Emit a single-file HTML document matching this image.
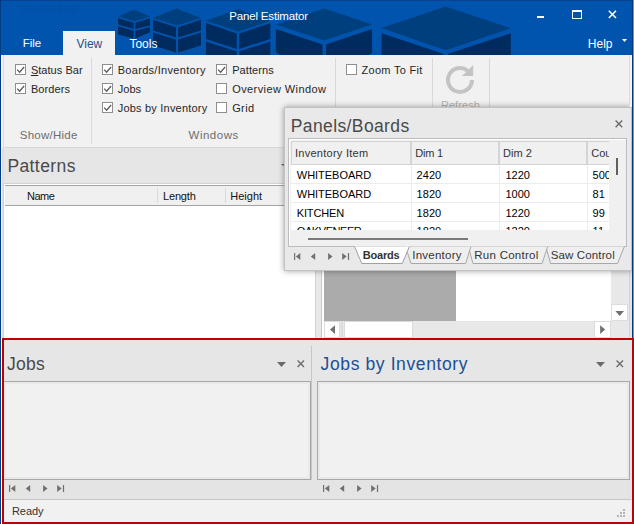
<!DOCTYPE html><html><head><meta charset="utf-8"><title>Panel Estimator</title><style>
html,body{margin:0;padding:0;}
body{width:634px;height:524px;position:relative;overflow:hidden;background:#ffffff;font-family:"Liberation Sans", sans-serif;}
.a{position:absolute;box-sizing:border-box;}
.t{position:absolute;white-space:pre;font-family:"Liberation Sans", sans-serif;}
.cb{width:11px;height:11px;background:#fff;border:1px solid #8e8e8e;}
svg{position:absolute;overflow:visible;}

</style></head><body>
<div class="a" style="left:0px;top:0px;width:634px;height:55px;background:#0054ad;"></div>
<svg class="a" style="left:0;top:0" width="634" height="55" viewBox="0 0 634 55">
<g fill="#003f7e">
<polygon points="133.7,9.6 150,16.6 134.4,21.2 118,16.6"/>
<polygon points="176.5,8.4 201,18 177,25.6 153,18"/>
<polygon points="237.6,9.2 270.3,21 238,31.6 206,20.8"/>
<polygon points="324.5,8.5 372.2,24.6 324.2,40.6 275.7,24.6"/>
<polygon points="445.7,6.6 510.8,28.2 445.7,50.2 381.4,28"/>
</g>
<g fill="#002b5e">
<!-- box1 -->
<polygon points="118,18.2 133.6,22.8 133.6,29 118,24.4"/>
<polygon points="135.4,22.8 150,18.2 150,25.4 135.4,29"/>
<polygon points="118,26.2 133.6,30.8 133.6,38.6 118,34.6"/>
<polygon points="135.4,30.8 150,27 150,32.2 135.4,38.6"/>
<!-- box2 -->
<polygon points="153,19.8 176,27.2 176,37.4 153,30.6"/>
<polygon points="178,27.2 201,19.8 201,30.6 178,37.4"/>
<polygon points="153,32.6 176,39.6 176,52.6 153,45.4"/>
<polygon points="178,39.6 201,32.6 201,45.4 178,52.6"/>
<!-- box3 -->
<polygon points="206,23 236.8,33.4 236.8,49 206,39"/>
<polygon points="239.2,33.4 270.3,23.2 270.3,39 239.2,49"/>
<polygon points="206,41.4 236.8,51.6 236.8,55 206,55"/>
<polygon points="239.2,51.6 270.3,41.4 270.3,55 239.2,55"/>
<!-- box4 -->
<polygon points="275.8,29 322.6,44.6 322.6,55 279.8,55 275.8,52"/>
<polygon points="326,44.6 372,29 372,53 369.2,55 326,55"/>
<!-- box5 -->
<polygon points="381.6,33.2 443.4,53.8 443.4,55 381.6,55"/>
<polygon points="448.2,53.8 510.8,33.2 510.8,55 448.2,55"/>
</g>
</svg>
<div class="a" style="left:0px;top:0px;width:634px;height:1px;background:#0a428f;"></div>
<div class="a" style="left:63px;top:31px;width:52px;height:24px;background:#f1f1f1;"></div>
<div class="a" style="left:537px;top:16px;width:7px;height:2px;background:#fff;"></div>
<div class="a" style="left:572px;top:10px;width:10px;height:9px;border:1px solid #fff;border-top-width:2px;"></div>
<svg class="a" style="left:608px;top:10px" width="9" height="9" viewBox="0 0 9 9"><path d="M0.8 0.8 L8 8 M8 0.8 L0.8 8" stroke="#fff" stroke-width="1.5" fill="none"/></svg>
<svg class="a" style="left:622px;top:39px" width="5" height="3" viewBox="0 0 5 3"><polygon points="0,0 5,0 2.5,3" fill="#fff"/></svg>
<div class="a" style="left:1px;top:55px;width:632px;height:92px;background:#f1f1f1;"></div>
<div class="a" style="left:1px;top:147px;width:632px;height:1px;background:#d8d8d8;"></div>
<div class="a" style="left:91px;top:58px;width:1px;height:86px;background:#d9d9d9;"></div>
<div class="a" style="left:335px;top:58px;width:1px;height:86px;background:#d9d9d9;"></div>
<div class="a" style="left:432px;top:58px;width:1px;height:86px;background:#d9d9d9;"></div>
<div class="a" style="left:489px;top:58px;width:1px;height:86px;background:#d9d9d9;"></div>
<div class="a cb" style="left:15px;top:64px"></div><svg class="a" style="left:15px;top:64px" width="11" height="11" viewBox="0 0 11 11"><path d="M2.2 5.6 L4.6 8.2 L9.1 3.0" fill="none" stroke="#5c5c5c" stroke-width="1.35"/></svg>
<div class="a cb" style="left:15px;top:83px"></div><svg class="a" style="left:15px;top:83px" width="11" height="11" viewBox="0 0 11 11"><path d="M2.2 5.6 L4.6 8.2 L9.1 3.0" fill="none" stroke="#5c5c5c" stroke-width="1.35"/></svg>
<div class="a cb" style="left:102px;top:64px"></div><svg class="a" style="left:102px;top:64px" width="11" height="11" viewBox="0 0 11 11"><path d="M2.2 5.6 L4.6 8.2 L9.1 3.0" fill="none" stroke="#5c5c5c" stroke-width="1.35"/></svg>
<div class="a cb" style="left:102px;top:83px"></div><svg class="a" style="left:102px;top:83px" width="11" height="11" viewBox="0 0 11 11"><path d="M2.2 5.6 L4.6 8.2 L9.1 3.0" fill="none" stroke="#5c5c5c" stroke-width="1.35"/></svg>
<div class="a cb" style="left:102px;top:102px"></div><svg class="a" style="left:102px;top:102px" width="11" height="11" viewBox="0 0 11 11"><path d="M2.2 5.6 L4.6 8.2 L9.1 3.0" fill="none" stroke="#5c5c5c" stroke-width="1.35"/></svg>
<div class="a cb" style="left:216px;top:64px"></div><svg class="a" style="left:216px;top:64px" width="11" height="11" viewBox="0 0 11 11"><path d="M2.2 5.6 L4.6 8.2 L9.1 3.0" fill="none" stroke="#5c5c5c" stroke-width="1.35"/></svg>
<div class="a cb" style="left:216px;top:83px"></div>
<div class="a cb" style="left:216px;top:102px"></div>
<div class="a cb" style="left:346px;top:64px"></div>
<svg class="a" style="left:440px;top:60px" width="40" height="40" viewBox="440 60 40 40">
<path d="M472 80 A12 12 0 1 1 467.6 70.7" fill="none" stroke="#c4c4c4" stroke-width="4"/>
<polygon points="473.2,65 473.2,76 462,76" fill="#c4c4c4"/></svg>
<div class="a" style="left:1px;top:148px;width:632px;height:37px;background:#e6e6e6;"></div>
<div class="a" style="left:3px;top:183px;width:313px;height:155px;background:#fff;border:1px solid #d2d2d2;border-bottom:none;"></div>
<div class="a" style="left:5px;top:185px;width:310px;height:21px;background:#f0f0f0;border-top:1px solid #a4a4a4;border-bottom:1px solid #a4a4a4;"></div>
<div class="a" style="left:157px;top:188px;width:1px;height:15px;background:#dadada;"></div>
<div class="a" style="left:225px;top:188px;width:1px;height:15px;background:#dadada;"></div>
<svg class="a" style="left:281px;top:164px" width="4" height="2" viewBox="0 0 4 2"><polygon points="0,0 4,0 2,2" fill="#6a6a6a"/></svg>
<div class="a" style="left:316px;top:147px;width:316px;height:191px;background:#ffffff;"></div>
<div class="a" style="left:316px;top:147px;width:5px;height:191px;background:#e8e8e8;"></div>
<div class="a" style="left:321px;top:147px;width:1px;height:191px;background:#c8c8c8;"></div>
<div class="a" style="left:324px;top:271px;width:132px;height:50px;background:#ababab;"></div>
<div class="a" style="left:324px;top:321px;width:305px;height:17px;background:#e8e8e8;"></div>
<div class="a" style="left:611px;top:271px;width:18px;height:50px;background:#e8e8e8;"></div>
<div class="a" style="left:324px;top:321px;width:16px;height:17px;background:#fefefe;border:1px solid #dcdcdc;"></div>
<div class="a" style="left:341px;top:321px;width:2px;height:17px;background:#dcdcdc;"></div>
<div class="a" style="left:344px;top:321px;width:69px;height:17px;background:#fefefe;border:1px solid #dadada;"></div>
<div class="a" style="left:594px;top:321px;width:17px;height:17px;background:#fefefe;border:1px solid #dcdcdc;"></div>
<div class="a" style="left:611px;top:304px;width:17px;height:17px;background:#fefefe;border:1px solid #dcdcdc;"></div>
<div class="a" style="left:629px;top:147px;width:1px;height:191px;background:#d4d4d4;"></div>
<div class="a" style="left:630px;top:147px;width:2px;height:191px;background:#e4e4e4;"></div>
<svg class="a" style="left:0;top:0" width="634" height="524" viewBox="0 0 634 524"><g fill="#707070"><polygon points="330,329.6 335,325.2 335,334"/><polygon points="605.2,329.6 600.1,325.2 600.1,334"/><polygon points="615.4,311 624,311 619.7,316"/></g></svg>
<div class="a" style="left:2px;top:338px;width:630px;height:184px;background:#e6e6e6;"></div>
<div class="a" style="left:3px;top:381px;width:308px;height:99px;background:#f1f1f1;border:1px solid #a8a8a8;box-shadow:inset 0 0 0 2px #e9e9e9;"></div>
<div class="a" style="left:317px;top:381px;width:313px;height:99px;background:#f1f1f1;border:1px solid #a8a8a8;box-shadow:inset 0 0 0 2px #e9e9e9;"></div>
<div class="a" style="left:311px;top:346px;width:1px;height:153px;background:#c6c6c6;"></div>
<div class="a" style="left:4px;top:480px;width:627px;height:19px;background:#e4e4e4;"></div>
<div class="a" style="left:4px;top:499px;width:627px;height:1px;background:#c6c6c6;"></div>
<div class="a" style="left:4px;top:500px;width:628px;height:22px;background:#f1f1f1;"></div>
<svg class="a" style="left:8.8px;top:485px" width="60" height="7" viewBox="0 0 60 7"><g fill="#707070"><rect x="0" y="0" width="1.2" height="7"/><polygon points="6.3,0 6.3,7 1.9,3.5"/><polygon points="21.2,0 21.2,7 16.8,3.5"/><polygon points="34.1,0 34.1,7 38.5,3.5"/><polygon points="48.2,0 48.2,7 52.7,3.5"/><rect x="53.9" y="0" width="1.2" height="7"/></g></svg>
<svg class="a" style="left:322.9px;top:485px" width="60" height="7" viewBox="0 0 60 7"><g fill="#707070"><rect x="0" y="0" width="1.2" height="7"/><polygon points="6.3,0 6.3,7 1.9,3.5"/><polygon points="21.2,0 21.2,7 16.8,3.5"/><polygon points="34.1,0 34.1,7 38.5,3.5"/><polygon points="48.2,0 48.2,7 52.7,3.5"/><rect x="53.9" y="0" width="1.2" height="7"/></g></svg>
<svg class="a" style="left:277.2px;top:361.5px" width="9" height="5" viewBox="0 0 9 5"><polygon points="0,0 9,0 4.5,5" fill="#6a6a6a"/></svg><svg class="a" style="left:296.5px;top:360px" width="7.6" height="7.6" viewBox="0 0 8 8"><path d="M0.6 0.6 L7.4 7.4 M7.4 0.6 L0.6 7.4" stroke="#6a6a6a" stroke-width="1.4" fill="none"/></svg>
<svg class="a" style="left:596px;top:361.5px" width="9" height="5" viewBox="0 0 9 5"><polygon points="0,0 9,0 4.5,5" fill="#6a6a6a"/></svg><svg class="a" style="left:615.6px;top:360px" width="7.6" height="7.6" viewBox="0 0 8 8"><path d="M0.6 0.6 L7.4 7.4 M7.4 0.6 L0.6 7.4" stroke="#6a6a6a" stroke-width="1.4" fill="none"/></svg>
<div class="a" style="left:623px;top:509px;width:2px;height:2px;background:#b4b4b4;"></div>
<div class="a" style="left:620px;top:512px;width:2px;height:2px;background:#b4b4b4;"></div>
<div class="a" style="left:623px;top:512px;width:2px;height:2px;background:#b4b4b4;"></div>
<div class="a" style="left:617px;top:515px;width:2px;height:2px;background:#b4b4b4;"></div>
<div class="a" style="left:620px;top:515px;width:2px;height:2px;background:#b4b4b4;"></div>
<div class="a" style="left:623px;top:515px;width:2px;height:2px;background:#b4b4b4;"></div>
<span class="t" style="left:229.2px;top:11.1px;font-size:11.5px;line-height:11.5px;color:#ffffff;letter-spacing:-0.163px;">Panel Estimator</span>
<span class="t" style="left:22.7px;top:38.0px;font-size:11.5px;line-height:11.5px;color:#ffffff;letter-spacing:-0.010px;">File</span>
<span class="t" style="left:76.6px;top:37.5px;font-size:12px;line-height:12px;color:#2b4f85;letter-spacing:-0.032px;">View</span>
<span class="t" style="left:129.4px;top:37.5px;font-size:12px;line-height:12px;color:#ffffff;letter-spacing:-0.004px;">Tools</span>
<span class="t" style="left:587.8px;top:37.5px;font-size:12px;line-height:12px;color:#ffffff;letter-spacing:0.004px;">Help</span>
<span class="t" style="left:20.2px;top:4.1px;font-size:11.5px;line-height:11.5px;color:#004fa4;letter-spacing:0.059px;">Show/Hide</span>
<span class="t" style="left:30.9px;top:64.7px;font-size:11px;line-height:11px;color:#262626;letter-spacing:0.036px;"><u>S</u>tatus Bar</span>
<span class="t" style="left:30.9px;top:83.7px;font-size:11px;line-height:11px;color:#262626;letter-spacing:0.095px;">Borders</span>
<span class="t" style="left:117.7px;top:64.7px;font-size:11px;line-height:11px;color:#262626;letter-spacing:0.303px;">Boards/Inventory</span>
<span class="t" style="left:117.7px;top:83.7px;font-size:11px;line-height:11px;color:#262626;letter-spacing:0.050px;">Jobs</span>
<span class="t" style="left:117.7px;top:102.7px;font-size:11px;line-height:11px;color:#262626;letter-spacing:0.205px;">Jobs by Inventory</span>
<span class="t" style="left:232.2px;top:64.7px;font-size:11px;line-height:11px;color:#262626;letter-spacing:0.090px;">Patterns</span>
<span class="t" style="left:232.2px;top:83.7px;font-size:11px;line-height:11px;color:#262626;letter-spacing:0.412px;">Overview Window</span>
<span class="t" style="left:232.2px;top:102.7px;font-size:11px;line-height:11px;color:#262626;letter-spacing:0.373px;">Grid</span>
<span class="t" style="left:361.5px;top:64.7px;font-size:11px;line-height:11px;color:#262626;letter-spacing:0.293px;">Zoom To Fit</span>
<span class="t" style="left:440.9px;top:100.0px;font-size:11px;line-height:11px;color:#b2b2b2;letter-spacing:0.078px;">Refresh</span>
<span class="t" style="left:19.8px;top:130.3px;font-size:11.5px;line-height:11.5px;color:#6e6e6e;letter-spacing:0.234px;">Show/Hide</span>
<span class="t" style="left:188.6px;top:130.3px;font-size:11.5px;line-height:11.5px;color:#6e6e6e;letter-spacing:0.491px;">Windows</span>
<span class="t" style="left:7.4px;top:157.5px;font-size:17.5px;line-height:17.5px;color:#4a4a4a;letter-spacing:0.402px;">Patterns</span>
<span class="t" style="left:26.9px;top:190.7px;font-size:11px;line-height:11px;color:#111;letter-spacing:-0.448px;">Name</span>
<span class="t" style="left:163.1px;top:190.7px;font-size:11px;line-height:11px;color:#111;letter-spacing:-0.191px;">Length</span>
<span class="t" style="left:230.3px;top:190.7px;font-size:11px;line-height:11px;color:#111;letter-spacing:0.001px;">Height</span>
<span class="t" style="left:7.0px;top:356.0px;font-size:17.5px;line-height:17.5px;color:#4a4a4a;letter-spacing:0.277px;">Jobs</span>
<span class="t" style="left:320.6px;top:356.0px;font-size:17.5px;line-height:17.5px;color:#1c4f93;letter-spacing:0.609px;">Jobs by Inventory</span>
<span class="t" style="left:12.0px;top:505.7px;font-size:11px;line-height:11px;color:#333;letter-spacing:-0.074px;">Ready</span>
<div class="a" style="left:284px;top:107px;width:348px;height:164px;background:#e9e9e9;border:1px solid #c2c2c2;box-shadow:0 0 6px rgba(0,0,0,0.38);"></div>
<div class="a" style="left:288px;top:138px;width:339px;height:109px;background:#f0f0f0;border:1px solid #bcbcbc;box-shadow:inset 1px 1px 0 #fff;"></div>
<div class="a" style="left:291px;top:141px;width:318px;height:24px;background:#f0f0f0;border:1px solid #d4d4d4;border-right:none;"></div>
<div class="a" style="left:410px;top:142px;width:2px;height:22px;background:#d4d4d4;"></div>
<div class="a" style="left:498px;top:142px;width:2px;height:22px;background:#d4d4d4;"></div>
<div class="a" style="left:586px;top:142px;width:2px;height:22px;background:#d4d4d4;"></div>
<div class="a" style="left:291px;top:165px;width:318px;height:65.4px;background:#fff;"></div>
<div class="a" style="left:291px;top:183px;width:318px;height:1px;background:#ececec;"></div>
<div class="a" style="left:291px;top:202px;width:318px;height:1px;background:#ececec;"></div>
<div class="a" style="left:291px;top:221px;width:318px;height:1px;background:#ececec;"></div>
<div class="a" style="left:411px;top:165px;width:1px;height:66px;background:#ececec;"></div>
<div class="a" style="left:499px;top:165px;width:1px;height:66px;background:#ececec;"></div>
<div class="a" style="left:587px;top:165px;width:1px;height:66px;background:#ececec;"></div>
<div class="a" style="left:308px;top:238px;width:160px;height:2px;background:#7a7a7a;"></div>
<div class="a" style="left:616px;top:158px;width:2px;height:17px;background:#606060;"></div>
<svg class="a" style="left:0;top:0" width="634" height="524" viewBox="0 0 634 524">
<polygon points="545.8,246.5 550.6,263.5 617.5,263.5 624.4,246.5" fill="#efefef" stroke="none"/><polyline points="545.8,246.5 550.6,263.5 617.5,263.5 624.4,246.5" fill="none" stroke="#a8a8a8" stroke-width="1"/>
<polygon points="468.3,246.5 473,263.5 542.1,263.5 547.7,246.5" fill="#efefef" stroke="none"/><polyline points="468.3,246.5 473,263.5 542.1,263.5 547.7,246.5" fill="none" stroke="#a8a8a8" stroke-width="1"/>
<polygon points="405.5,246.5 411,263.5 465.7,263.5 470.9,246.5" fill="#efefef" stroke="none"/><polyline points="405.5,246.5 411,263.5 465.7,263.5 470.9,246.5" fill="none" stroke="#a8a8a8" stroke-width="1"/>
<polygon points="354.5,246.5 361.8,263.5 402.3,263.5 409.4,246.5" fill="#ffffff" stroke="none"/><polyline points="354.5,246.5 361.8,263.5 402.3,263.5 409.4,246.5" fill="none" stroke="#a0a0a0" stroke-width="1"/>
</svg>
<svg class="a" style="left:293.9px;top:252.7px" width="60" height="7" viewBox="0 0 60 7"><g fill="#707070"><rect x="0" y="0" width="1.2" height="7"/><polygon points="6.3,0 6.3,7 1.9,3.5"/><polygon points="21.2,0 21.2,7 16.8,3.5"/><polygon points="34.1,0 34.1,7 38.5,3.5"/><polygon points="48.2,0 48.2,7 52.7,3.5"/><rect x="53.9" y="0" width="1.2" height="7"/></g></svg>
<svg class="a" style="left:615.4px;top:120.2px" width="7.8" height="7.8" viewBox="0 0 8 8"><path d="M0.6 0.6 L7.4 7.4 M7.4 0.6 L0.6 7.4" stroke="#6a6a6a" stroke-width="1.4" fill="none"/></svg>
<div class="a" style="left:291px;top:141px;width:318px;height:89.4px;overflow:hidden;">
<span class="t" style="left:4.0px;top:7.2px;font-size:11px;line-height:11px;color:#333;letter-spacing:0.261px;">Inventory Item</span>
<span class="t" style="left:124.2px;top:7.2px;font-size:11px;line-height:11px;color:#333;letter-spacing:-0.209px;">Dim 1</span>
<span class="t" style="left:212.1px;top:7.2px;font-size:11px;line-height:11px;color:#333;letter-spacing:0.016px;">Dim 2</span>
<span class="t" style="left:300.2px;top:7.2px;font-size:11px;line-height:11px;color:#333;letter-spacing:0.000px;">Count</span>
<span class="t" style="left:5.8px;top:28.6px;font-size:11px;line-height:11px;color:#000;letter-spacing:-0.029px;">WHITEBOARD</span>
<span class="t" style="left:125.6px;top:28.6px;font-size:11px;line-height:11px;color:#000;letter-spacing:0.039px;">2420</span>
<span class="t" style="left:214.4px;top:28.6px;font-size:11px;line-height:11px;color:#000;letter-spacing:0.005px;">1220</span>
<span class="t" style="left:301.6px;top:28.6px;font-size:11px;line-height:11px;color:#000;letter-spacing:0.000px;">5000</span>
<span class="t" style="left:5.8px;top:47.6px;font-size:11px;line-height:11px;color:#000;letter-spacing:-0.029px;">WHITEBOARD</span>
<span class="t" style="left:125.6px;top:47.6px;font-size:11px;line-height:11px;color:#000;letter-spacing:0.039px;">1820</span>
<span class="t" style="left:214.4px;top:47.6px;font-size:11px;line-height:11px;color:#000;letter-spacing:0.005px;">1000</span>
<span class="t" style="left:301.6px;top:47.6px;font-size:11px;line-height:11px;color:#000;letter-spacing:0.000px;">81</span>
<span class="t" style="left:5.8px;top:66.6px;font-size:11px;line-height:11px;color:#000;letter-spacing:-0.164px;">KITCHEN</span>
<span class="t" style="left:125.6px;top:66.6px;font-size:11px;line-height:11px;color:#000;letter-spacing:0.039px;">1820</span>
<span class="t" style="left:214.4px;top:66.6px;font-size:11px;line-height:11px;color:#000;letter-spacing:0.005px;">1220</span>
<span class="t" style="left:301.6px;top:66.6px;font-size:11px;line-height:11px;color:#000;letter-spacing:0.000px;">99</span>
<span class="t" style="left:5.8px;top:85.0px;font-size:11px;line-height:11px;color:#000;letter-spacing:-0.434px;">OAKVENEER</span>
<span class="t" style="left:125.6px;top:85.0px;font-size:11px;line-height:11px;color:#000;letter-spacing:0.039px;">1820</span>
<span class="t" style="left:214.4px;top:85.0px;font-size:11px;line-height:11px;color:#000;letter-spacing:0.005px;">1220</span>
<span class="t" style="left:301.6px;top:85.0px;font-size:11px;line-height:11px;color:#000;letter-spacing:0.000px;">11</span>
</div>
<span class="t" style="left:290.8px;top:117.7px;font-size:17.5px;line-height:17.5px;color:#4a4a4a;letter-spacing:0.381px;">Panels/Boards</span>
<span class="t" style="left:362.7px;top:250.0px;font-size:11px;line-height:11px;color:#333;letter-spacing:-0.181px;font-weight:bold;">Boards</span>
<span class="t" style="left:412.3px;top:249.5px;font-size:11.5px;line-height:11.5px;color:#333;letter-spacing:0.236px;">Inventory</span>
<span class="t" style="left:474.3px;top:249.5px;font-size:11.5px;line-height:11.5px;color:#333;letter-spacing:0.263px;">Run Control</span>
<span class="t" style="left:550.7px;top:249.5px;font-size:11.5px;line-height:11.5px;color:#333;letter-spacing:0.136px;">Saw Control</span>
<div class="a" style="left:0px;top:0px;width:1px;height:524px;background:#003c80;"></div>
<div class="a" style="left:632px;top:0px;width:1px;height:524px;background:#003c80;"></div>
<div class="a" style="left:633px;top:0px;width:1px;height:524px;background:#6c97c9;"></div>
<div class="a" style="left:1px;top:55px;width:1px;height:283px;background:#f5f1ee;"></div>
<div class="a" style="left:2px;top:55px;width:1px;height:93px;background:#f5f1ee;"></div>
<div class="a" style="left:3px;top:55px;width:1px;height:93px;background:#dcdcdc;"></div>
<div class="a" style="left:2px;top:148px;width:1px;height:190px;background:#dedede;"></div>
<div class="a" style="left:3px;top:148px;width:1px;height:35px;background:#dedede;"></div>
<div class="a" style="left:630px;top:55px;width:2px;height:52px;background:#f5f1ee;"></div>
<div class="a" style="left:629px;top:55px;width:1px;height:52px;background:#dcdcdc;"></div>
<div class="a" style="left:2px;top:338px;width:632px;height:186px;border:2px solid #c00000;"></div>
</body></html>
